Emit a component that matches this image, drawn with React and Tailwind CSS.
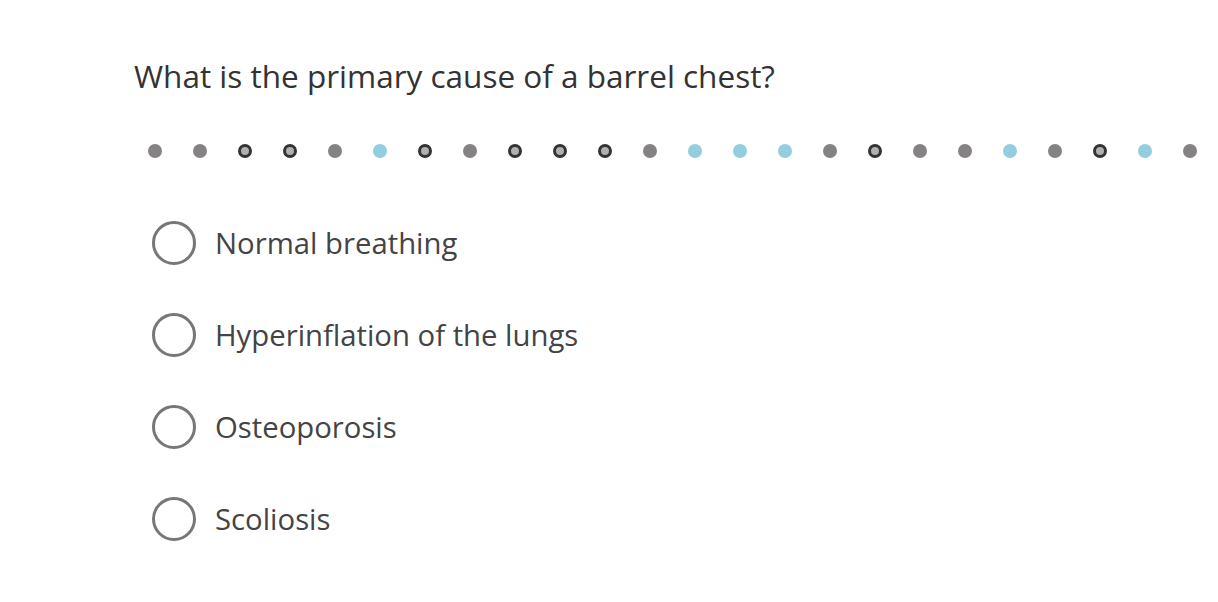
const dots = [
  'g', 'g', 'r', 'r', 'g', 'b', 'r', 'g', 'r', 'r', 'r', 'g',
  'b', 'b', 'b', 'g', 'r', 'g', 'g', 'b', 'g', 'r', 'b', 'g'
]

const options = ['Normal breathing', 'Hyperinflation of the lungs', 'Osteoporosis', 'Scoliosis']

function Dot({ kind }) {
  if (kind === 'r') {
    return <span className="h-[14px] w-[14px] shrink-0 rounded-full border-[3px] border-[#333] bg-[#b0b0b0]" />
  }
  if (kind === 'b') {
    return <span className="h-[14px] w-[14px] shrink-0 rounded-full bg-[#92cde0]" />
  }
  return <span className="h-[14px] w-[14px] shrink-0 rounded-full bg-[#848282]" />
}

export default function App() {
  return (
    <main className="min-h-screen overflow-hidden bg-white pl-[134px] pt-[56px] font-['Open_Sans',sans-serif]">
      <h1 className="whitespace-nowrap text-[31.5px] leading-[40px] text-[#333]">What is the primary cause of a barrel chest?</h1>

      <div className="mt-[48px] flex gap-[31px] pl-[14px]">
        {dots.map((d, i) => (
          <Dot key={i} kind={d} />
        ))}
      </div>

      <div className="mt-[63px] flex flex-col gap-[48px] pl-[18px]">
        {options.map((label) => (
          <label className="flex h-[44px] items-center gap-[19px]" key={label}>
            <span className="h-[44px] w-[44px] shrink-0 rounded-full border-[3px] border-[#777]" />
            <span className="whitespace-nowrap text-[29.3px] leading-[42px] text-[#444]">{label}</span>
          </label>
        ))}
      </div>
    </main>
  )
}
